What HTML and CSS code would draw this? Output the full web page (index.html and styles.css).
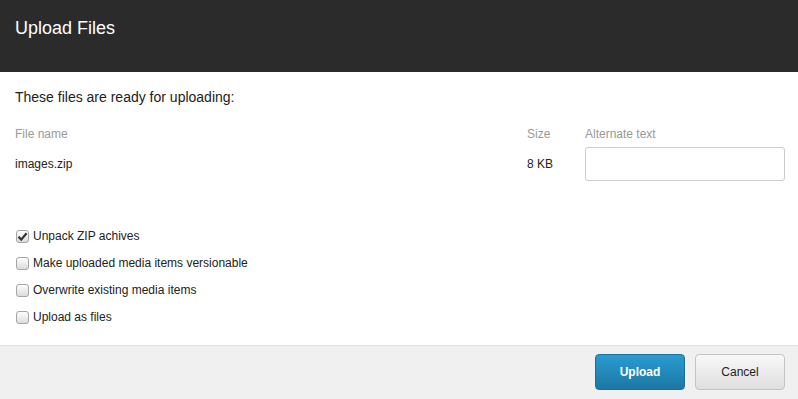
FILE: index.html
```html
<!DOCTYPE html>
<html lang="en">
<head>
    <meta charset="UTF-8">
    <title>Upload Files</title>
    <link rel="stylesheet" href="styles.css">
</head>
<body>
<div class="dialog">
    <div class="dialog-header">
        <h1>Upload Files</h1>
    </div>

    <div class="dialog-body">
        <p class="intro">These files are ready for uploading:</p>

        <div class="file-table">
            <div class="col-head">File name</div>
            <div class="col-head">Size</div>
            <div class="col-head">Alternate text</div>

            <div class="cell">images.zip</div>
            <div class="cell">8 KB</div>
            <div class="cell"><input type="text" class="alt-input"></div>
        </div>

        <div class="options">
            <label class="option">
                <span class="box">
                    <svg width="11" height="11" viewBox="0 0 11 11"><path d="M1.5 5.8 L4.2 8.6 L9.6 2.2" fill="none" stroke="#333" stroke-width="2.2"/></svg>
                </span>
                Unpack ZIP achives
            </label>
            <label class="option"><span class="box"></span>Make uploaded media items versionable</label>
            <label class="option"><span class="box"></span>Overwrite existing media items</label>
            <label class="option"><span class="box"></span>Upload as files</label>
        </div>
    </div>

    <div class="dialog-footer">
        <button class="btn btn-primary">Upload</button>
        <button class="btn">Cancel</button>
    </div>
</div>
</body>
</html>
```

FILE: styles.css
```css
body {
    margin: 0;
    font-family: "Liberation Sans", Arial, sans-serif;
    background: #fff;
    color: #222;
}

.dialog {
    width: 798px;
    height: 399px;
    display: flex;
    flex-direction: column;
}

.dialog-header {
    background-color: #2b2b2b;
    height: 72px;
    padding: 17px 15px 0;
    box-sizing: border-box;
}

.dialog-header h1 {
    margin: 0;
    color: #fff;
    font-size: 18px;
    font-weight: normal;
    line-height: 22px;
}

.dialog-body {
    flex: 1;
    padding: 16px 13px 0 15px;
}

.intro {
    margin: 0;
    font-size: 14px;
    line-height: 18px;
    color: #222;
}

.file-table {
    display: grid;
    grid-template-columns: 1fr 58px 200px;
    align-items: center;
    margin-top: 20px;
    font-size: 12px;
}

.col-head {
    color: #999;
    line-height: 16px;
    margin-bottom: 5px;
}

.cell {
    color: #222;
}

.alt-input {
    display: block;
    width: 200px;
    height: 34px;
    box-sizing: border-box;
    border: 1px solid #ccc;
    border-radius: 3px;
    padding: 4px 8px;
    font-family: inherit;
    font-size: 12px;
}

.options {
    margin-top: 47px;
    display: flex;
    flex-direction: column;
    gap: 11px;
}

.option {
    display: flex;
    align-items: center;
    font-size: 12px;
    line-height: 16px;
    color: #222;
    padding-left: 1px;
}

.box {
    width: 11px;
    height: 11px;
    border: 1px solid #a5a5a5;
    border-radius: 3px;
    background: linear-gradient(#fdfdfd, #dcdcdc);
    margin-right: 4px;
    display: flex;
    align-items: center;
    justify-content: center;
}

.dialog-footer {
    height: 54px;
    box-sizing: border-box;
    border-top: 1px solid #e3e3e3;
    background-color: #f0f0f0;
    display: flex;
    justify-content: flex-end;
    align-items: flex-start;
    gap: 10px;
    padding: 8px 13px 0 0;
}

.btn {
    width: 90px;
    height: 36px;
    border: 1px solid #c4c4c4;
    border-radius: 4px;
    background: linear-gradient(#f8f8f8, #dfdfdf);
    font-family: inherit;
    font-size: 12px;
    color: #222;
    cursor: pointer;
}

.btn-primary {
    border-color: #1c6f98;
    background: linear-gradient(#2a9bd2, #1c77a3);
    color: #fff;
    font-weight: bold;
}
```
